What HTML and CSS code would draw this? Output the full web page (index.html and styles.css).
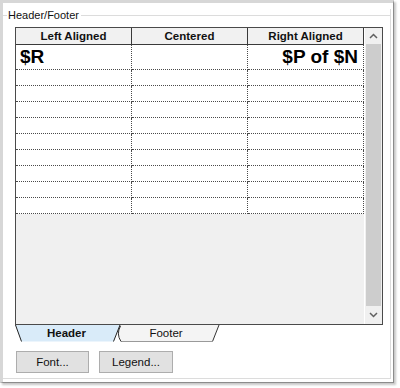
FILE: index.html
```html
<!DOCTYPE html>
<html>
<head>
<meta charset="utf-8">
<link rel="stylesheet" href="styles.css">
</head>
<body>
<div class="dialog">
  <div class="group">
    <div class="grouphead"><span class="gl-short"></span><span class="gtitle">Header/Footer</span><span class="gl-long"></span></div>
    <div class="listbox">
      <div class="grid">
        <div class="row head">
          <div class="cell">Left Aligned</div>
          <div class="cell">Centered</div>
          <div class="cell">Right Aligned</div>
        </div>
        <div class="row first">
          <div class="cell left">$R</div>
          <div class="cell"></div>
          <div class="cell right">$P of $N</div>
        </div>
        <div class="row"><div class="cell"></div><div class="cell"></div><div class="cell"></div></div>
        <div class="row"><div class="cell"></div><div class="cell"></div><div class="cell"></div></div>
        <div class="row"><div class="cell"></div><div class="cell"></div><div class="cell"></div></div>
        <div class="row"><div class="cell"></div><div class="cell"></div><div class="cell"></div></div>
        <div class="row"><div class="cell"></div><div class="cell"></div><div class="cell"></div></div>
        <div class="row"><div class="cell"></div><div class="cell"></div><div class="cell"></div></div>
        <div class="row"><div class="cell"></div><div class="cell"></div><div class="cell"></div></div>
        <div class="row"><div class="cell"></div><div class="cell"></div><div class="cell"></div></div>
        <div class="row"><div class="cell"></div><div class="cell"></div><div class="cell"></div></div>
      </div>
      <div class="scroll">
        <div class="sbtn up"><svg width="9" height="6" viewBox="0 0 9 6"><polyline points="1,5 4.5,1.5 8,5" fill="none" stroke="#606060" stroke-width="1.5"/></svg></div>
        <div class="thumb"></div>
        <div class="sbtn down"><svg width="9" height="6" viewBox="0 0 9 6"><polyline points="1,1 4.5,4.5 8,1" fill="none" stroke="#606060" stroke-width="1.5"/></svg></div>
      </div>
    </div>
    <div class="tabs">
      <svg class="tabshapes" width="210" height="18" viewBox="0 0 210 18">
        <path d="M101,0 L204,0 L197.5,16.5 L106,16.5 Q101,9 105,1 Z" fill="#f4f4f4"/>
        <path d="M204,0 L197.5,16.5" stroke="#333" stroke-width="1" fill="none"/>
        <path d="M106,16.5 L197.5,16.5" stroke="#9a9a9a" stroke-width="1" fill="none"/>
        <path d="M106,16.5 Q101,9 105.5,1" stroke="#333" stroke-width="1" fill="none"/>
        <path d="M0.5,0 L105,0 L98.5,16.5 L6.5,16.5 Z" fill="#d9ebf9"/>
        <path d="M0.5,0 L6.5,16.5" stroke="#222" stroke-width="1" fill="none"/>
        <path d="M105,0 L98.5,16.5" stroke="#222" stroke-width="1" fill="none"/>
      </svg>
      <div class="tablabels">
        <span class="tab sel">Header</span>
        <span class="tab">Footer</span>
      </div>
    </div>
    <div class="buttons">
      <div class="btn font">Font...</div>
      <div class="btn legend">Legend...</div>
    </div>
  </div>
</div>
</body>
</html>
```

FILE: styles.css
```css
html, body {
  margin: 0;
  padding: 0;
  background: #ffffff;
}
body {
  font-family: "Liberation Sans", Arial, sans-serif;
  color: #111;
  width: 400px;
  height: 388px;
  overflow: hidden;
}
.dialog {
  width: 390px;
  height: 379px;
  background: #ffffff;
  border-top: 3px solid #d7d7d7;
  border-left: 3px solid #d7d7d7;
  border-right: 1px solid #8c8c8c;
  border-bottom: 1px solid #8c8c8c;
  box-shadow: 2px 2px 2px rgba(0, 0, 0, 0.22);
}
.group {
  margin-top: 6px;
  width: 387px;
  height: 369px;
  border-right: 1px solid #dcdcdc;
  border-bottom: 1px solid #dcdcdc;
}
.grouphead {
  display: flex;
  align-items: center;
  height: 13px;
}
.gl-short {
  width: 4px;
  height: 1px;
  background: #dcdcdc;
}
.gl-long {
  flex: 1;
  height: 1px;
  background: #dcdcdc;
}
.gtitle {
  font-size: 11px;
  line-height: 13px;
  padding: 0 2px 0 1px;
  color: #111;
}
.listbox {
  margin-top: 5px;
  margin-left: 12px;
  width: 366px;
  height: 296px;
  border: 1px solid #4a4a4a;
  display: flex;
}
.grid {
  width: 348px;
  height: 296px;
  background: #f0f0f0;
}
.row {
  display: flex;
  height: 16px;
  background: #ffffff;
}
.row .cell {
  width: 115px;
  height: 15px;
  border-right: 1px dotted #4a4a4a;
  border-bottom: 1px dotted #4a4a4a;
}
.row.head {
  height: 17px;
  background: #f1f1f1;
}
.row.head .cell {
  height: 16px;
  border-right: 1px solid #3a3a3a;
  border-bottom: 1px solid #3a3a3a;
  font-weight: bold;
  font-size: 11.5px;
  line-height: 16px;
  text-align: center;
  color: #111;
}
.row.first {
  height: 25px;
}
.row.first .cell {
  height: 24px;
  font-weight: bold;
  font-size: 19px;
  line-height: 24px;
  color: #000;
}
.cell.left {
  padding-left: 4px;
  width: 111px !important;
}
.cell.right {
  text-align: right;
  padding-right: 5px;
  width: 110px !important;
}
.scroll {
  width: 17px;
  border-left: 1px solid #ffffff;
  background: #f0f0f0;
  display: flex;
  flex-direction: column;
}
.sbtn {
  display: flex;
  align-items: center;
  justify-content: center;
}
.sbtn.up {
  height: 16px;
}
.sbtn.down {
  height: 18px;
}
.thumb {
  flex: 1;
  margin: 0 1px 0 1px;
  background: #cdcdcd;
}
.tabs {
  margin-left: 12px;
  height: 18px;
  display: grid;
}
.tabshapes, .tablabels {
  grid-area: 1 / 1;
}
.tablabels {
  display: flex;
  align-items: center;
  height: 17px;
}
.tab {
  font-size: 11.5px;
  line-height: 17px;
  text-align: center;
  color: #111;
}
.tab.sel {
  width: 103px;
  font-weight: bold;
}
.tab:not(.sel) {
  width: 96px;
}
.buttons {
  display: flex;
  gap: 10px;
  margin-top: 8px;
  margin-left: 13px;
}
.btn {
  height: 20px;
  border: 1px solid #adadad;
  background: #e1e1e1;
  font-size: 11.5px;
  line-height: 20px;
  text-align: center;
  color: #111;
}
.btn.font {
  width: 71px;
}
.btn.legend {
  width: 72px;
}
```
